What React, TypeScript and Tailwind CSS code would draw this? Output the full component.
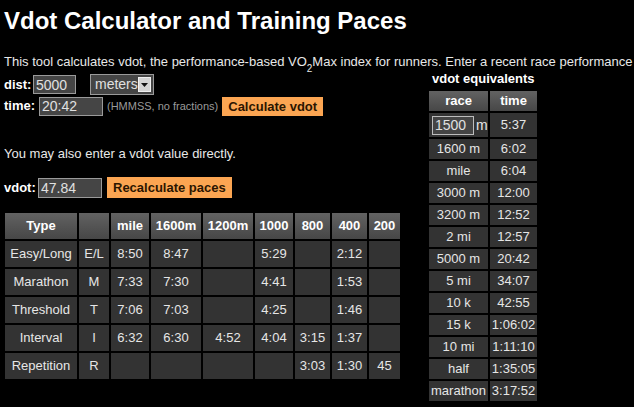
import React from 'react'

const font = { fontFamily: '"Liberation Sans", Arial, sans-serif' }

const headers = ['Type', '', 'mile', '1600m', '1200m', '1000', '800', '400', '200']
const widths = ['w-[72px]', 'w-[30px]', 'w-[38px]', 'w-[50px]', 'w-[50px]', 'w-[38px]', 'w-[35px]', 'w-[35px]', 'w-[31px]']

const paces = [
  ['Easy/Long', 'E/L', '8:50', '8:47', '', '5:29', '', '2:12', ''],
  ['Marathon', 'M', '7:33', '7:30', '', '4:41', '', '1:53', ''],
  ['Threshold', 'T', '7:06', '7:03', '', '4:25', '', '1:46', ''],
  ['Interval', 'I', '6:32', '6:30', '4:52', '4:04', '3:15', '1:37', ''],
  ['Repetition', 'R', '', '', '', '', '3:03', '1:30', '45'],
]

const equivalents = [
  ['1600 m', '6:02'], ['mile', '6:04'], ['3000 m', '12:00'], ['3200 m', '12:52'],
  ['2 mi', '12:57'], ['5000 m', '20:42'], ['5 mi', '34:07'], ['10 k', '42:55'],
  ['15 k', '1:06:02'], ['10 mi', '1:11:10'], ['half', '1:35:05'], ['marathon', '3:17:52'],
]

const head = 'bg-gradient-to-b from-[#626262] to-[#474747] text-white font-bold text-center p-0'
const cell = 'bg-[#333333] text-[#e6e6e6] text-center p-0'
const input = 'bg-[#454545] border border-[#9a9a9a] text-[#e0e0e0] text-[14px] leading-none px-[2px] outline-none'
const orange = 'bg-[#fba552] text-[#2b1500] font-bold text-[13px] leading-none px-[6px]'

export default function App() {
  return (
    <div style={font} className="w-[634px] h-[407px] overflow-hidden bg-black text-[#eeeeee] px-[4px]">
      <h1 className="text-[24px] font-bold text-white leading-[28px] pt-[7px]">Vdot Calculator and Training Paces</h1>
      <p className="text-[13px] leading-[15px] mt-[19px] whitespace-nowrap text-[#e8e8e8]">
        This tool calculates vdot, the performance-based VO<sub className="text-[10px] leading-none align-[-3px]">2</sub>Max index for runners. Enter a recent race performance
      </p>

      <div className="flex items-start">
        <div className="w-[425px] text-[13px]">
          <div className="flex items-center h-[21px] mt-[3px]">
            <span className="font-bold text-white w-[29px]">dist:</span>
            <input className={`${input} w-[43px] h-[19px]`} defaultValue="5000" />
            <div className="ml-[14px] w-[64px] h-[21px] border border-[#9a9a9a] bg-[#454545] flex items-center justify-between pl-[4px] pr-[2px]">
              <span className="text-[14px] text-[#e0e0e0]">meters</span>
              <span className="w-[15px] h-[15px] bg-[#d4d4d4] border border-[#f0f0f0] flex items-center justify-center">
                <svg width="7" height="4" viewBox="0 0 7 4"><path d="M0 0h7L3.5 4z" fill="#111" /></svg>
              </span>
            </div>
          </div>
          <div className="flex items-center h-[20px] mt-[1px]">
            <span className="font-bold text-white w-[35px]">time:</span>
            <input className={`${input} w-[64px] h-[19px]`} defaultValue="20:42" />
            <span className="text-[11px] text-[#9a9a9a] ml-[4px]">(HMMSS, no fractions)</span>
            <button className={`${orange} h-[19px] ml-[4px]`}>Calculate vdot</button>
          </div>

          <div className="mt-[30px] leading-[15px] text-[#e8e8e8]">You may also enter a vdot value directly.</div>

          <div className="flex items-center h-[21px] mt-[16px]">
            <span className="font-bold text-white w-[34px]">vdot:</span>
            <input className={`${input} w-[64px] h-[20px]`} defaultValue="47.84" />
            <button className={`${orange} h-[21px] ml-[5px]`}>Recalculate paces</button>
          </div>

          <table className="border-separate border-spacing-[2px] -ml-[1px] mt-[13px] text-[13px]">
            <thead>
              <tr className="h-[26px]">
                {headers.map((h, i) => (
                  <th key={i} className={`${head} ${widths[i]}`}>{h}</th>
                ))}
              </tr>
            </thead>
            <tbody>
              {paces.map(r => (
                <tr key={r[0]} className="h-[26px]">
                  {r.map((c, i) => <td key={i} className={cell}>{c}</td>)}
                </tr>
              ))}
            </tbody>
          </table>
        </div>

        <div className="text-[13px]">
          <div className="font-bold text-white leading-[15px] ml-[3px]">vdot equivalents</div>
          <table className="border-separate border-spacing-[2px] -ml-[2px] mt-[3px]">
            <thead>
              <tr className="h-[20px]">
                <th className={`${head} w-[59px]`}>race</th>
                <th className={`${head} w-[47px]`}>time</th>
              </tr>
            </thead>
            <tbody>
              <tr className="h-[24px]">
                <td className={`${cell} text-left`}>
                  <div className="flex items-center pl-[3px]">
                    <input className={`${input} w-[42px] h-[19px] border-[#bdbdbd]`} defaultValue="1500" />
                    <span className="ml-[2px] text-[14px]">m</span>
                  </div>
                </td>
                <td className={cell}>5:37</td>
              </tr>
              {equivalents.map(([r, t]) => (
                <tr key={r} className="h-[20px]">
                  <td className={cell}>{r}</td>
                  <td className={cell}>{t}</td>
                </tr>
              ))}
            </tbody>
          </table>
        </div>
      </div>
    </div>
  )
}
